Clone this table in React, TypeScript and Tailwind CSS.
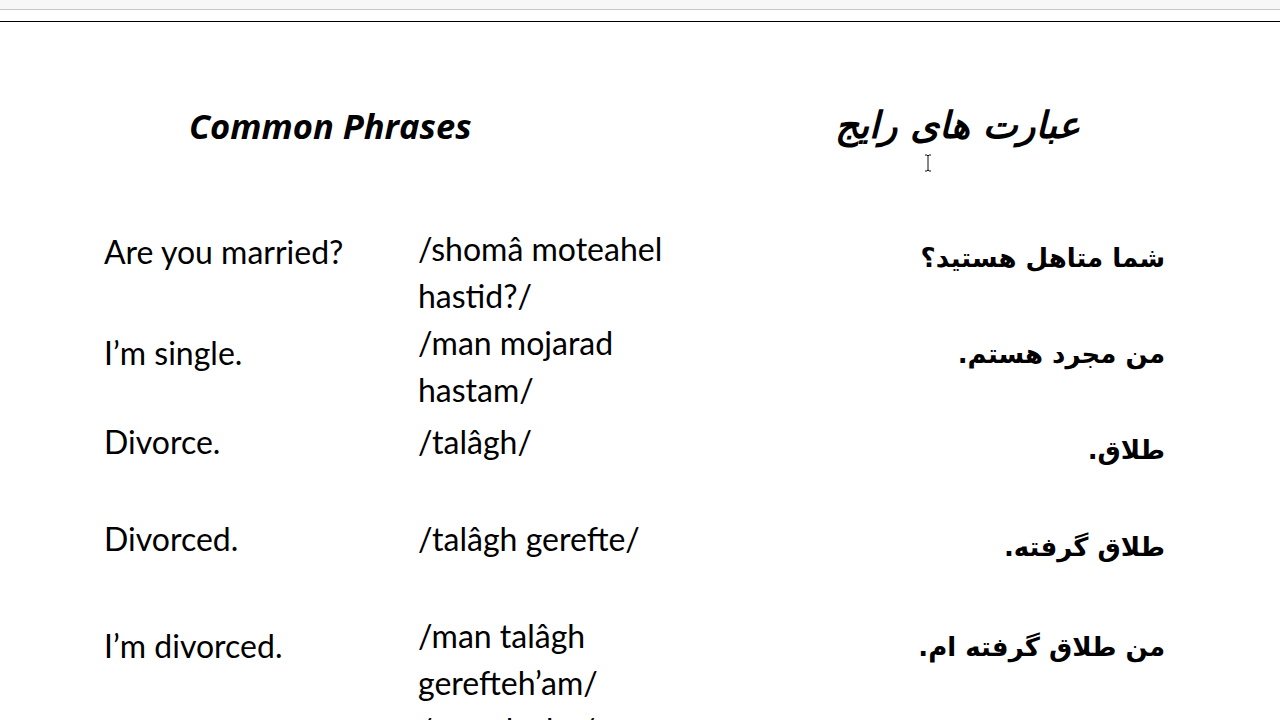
const ROWS = [
  {
    en: "Are you married?",
    pron: ["/shomâ moteahel", "hastid?/"],
    fa: "شما متاهل هستید؟",
    h: "h-[94px]",
    enPad: "pt-[3px]",
    faPad: "pt-[10px]",
  },
  {
    en: "I’m single.",
    pron: ["/man mojarad", "hastam/"],
    fa: "من مجرد هستم.",
    h: "h-[99px]",
    enPad: "pt-[10px]",
    faPad: "pt-[12px]",
  },
  {
    en: "Divorce.",
    pron: ["/talâgh/"],
    fa: "طلاق.",
    h: "h-[97px]",
    enPad: "pt-0",
    faPad: "pt-[9px]",
  },
  {
    en: "Divorced.",
    pron: ["/talâgh gerefte/"],
    fa: "طلاق گرفته.",
    h: "h-[97px]",
    enPad: "pt-0",
    faPad: "pt-[9px]",
  },
  {
    en: "I’m divorced.",
    pron: ["/man talâgh", "gerefteh’am/", "/mosalaghe/"],
    fa: "من طلاق گرفته ام.",
    h: "h-[160px]",
    enPad: "pt-[10px]",
    faPad: "pt-[12px]",
  },
];

const latin = { fontFamily: "Lato, 'Open Sans', sans-serif" };
const heading = { fontFamily: "'Open Sans', Lato, sans-serif" };
const persian = { fontFamily: "'DejaVu Sans', sans-serif" };

function Cursor() {
  return (
    <svg width="8" height="18" viewBox="0 0 8 18" className="absolute left-[924px] top-[154px]">
      <path d="M1 1h2l1 1 1-1h2M4 2v14M1 17h2l1-1 1 1h2" fill="none" stroke="#111" strokeWidth="1" />
    </svg>
  );
}

export default function App() {
  return (
    <div className="relative w-[1280px] h-[720px] overflow-hidden bg-white text-black">
      <div className="h-[9px] bg-[#f7f7f7]" />
      <div className="h-px bg-[#c6c6c6]" />
      <div className="h-[11px]" />
      <div className="h-px bg-black" />

      <div className="flex items-start justify-between pl-[189px] pr-[200px] pt-[82px] h-[202.5px]">
        <h1 className="text-[34.5px] leading-[44px] font-bold italic" style={heading}>
          Common Phrases
        </h1>
        <h1 dir="rtl" className="text-[37px] leading-[44px] font-bold italic" style={persian}>
          عبارت های رایج
        </h1>
      </div>

      <div className="pl-[104px] pr-[115px]">
        {ROWS.map((r) => (
          <div key={r.en} className={`grid grid-cols-[314px_320px_1fr] ${r.h}`}>
            <div className={`text-[32px] leading-[47px] ${r.enPad}`} style={latin}>
              {r.en}
            </div>
            <div className="text-[32px] leading-[47px]" style={latin}>
              {r.pron.map((p) => (
                <div key={p}>{p}</div>
              ))}
            </div>
            <div dir="rtl" className={`text-right text-[26px] leading-[47px] font-bold ${r.faPad}`} style={persian}>
              {r.fa}
            </div>
          </div>
        ))}
      </div>

      <Cursor />
    </div>
  );
}
